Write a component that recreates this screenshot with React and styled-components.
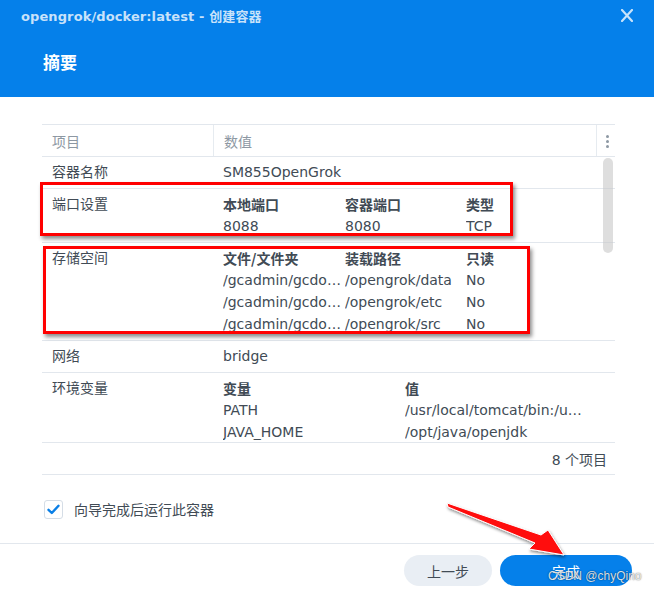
import React from 'react'
import styled, { createGlobalStyle } from 'styled-components'

const GlobalStyle = createGlobalStyle`
    *, *::before, *::after {
        box-sizing: border-box;
    }
    html, body {
        margin: 0;
        padding: 0;
        background: #ffffff;
    }
    body {
        font-family: "DejaVu Sans", "Noto Sans CJK SC", sans-serif;
        font-size: 14px;
        color: #414b55;
    }
`

const rows = [
    { label: '容器名称', value: 'SM855OpenGrok' },
    {
        label: '端口设置',
        cols: [122, 121],
        head: ['本地端口', '容器端口', '类型'],
        lines: [['8088', '8080', 'TCP']],
    },
    {
        label: '存储空间',
        cols: [122, 121],
        head: ['文件/文件夹', '装载路径', '只读'],
        lines: [
            ['/gcadmin/gcdocker/opengrok/data', '/opengrok/data', 'No'],
            ['/gcadmin/gcdocker/opengrok/etc', '/opengrok/etc', 'No'],
            ['/gcadmin/gcdocker/opengrok/src', '/opengrok/src', 'No'],
        ],
    },
    { label: '网络', value: 'bridge' },
    {
        label: '环境变量',
        cols: [182],
        head: ['变量', '值'],
        lines: [
            ['PATH', '/usr/local/tomcat/bin:/usr/local/sbin:/usr/bin'],
            ['JAVA_HOME', '/opt/java/openjdk'],
        ],
    },
    { label: '执行命令', value: '/scripts/start.py' },
    { label: '自动重新启动', value: '否' },
    { label: '资源限制', value: '无' },
]

const SubTable = ({ cols, head, lines }) => {
    const template = cols.map(c => `${c}px`).join(' ') + ' 1fr'
    return (
        <SubGrid $template={template}>
            {head.map(h => <SubHead key={h}>{h}</SubHead>)}
            {lines.map((line, i) => line.map((cell, j) => (
                <SubCell key={`${i}-${j}`}>{cell}</SubCell>
            )))}
        </SubGrid>
    )
}

const CheckIcon = () => (
    <svg width="13" height="11" viewBox="0 0 13 11">
        <path d="M1.5 5.8 L4.8 9 L11.5 1.8" fill="none" stroke="#0a7fe6" strokeWidth="2.4" strokeLinecap="round" strokeLinejoin="round" />
    </svg>
)

const CloseIcon = () => (
    <svg width="12" height="13" viewBox="0 0 12 13">
        <path d="M1 1 L11 12 M11 1 L1 12" stroke="rgba(255,255,255,0.78)" strokeWidth="2.2" strokeLinecap="square" />
    </svg>
)

const Arrow = () => (
    <ArrowSvg width="654" height="594" viewBox="0 0 654 594">
        <defs>
            <filter id="arrowShadow" x="-20%" y="-20%" width="140%" height="140%">
                <feDropShadow dx="1" dy="2" stdDeviation="1.5" floodColor="#000" floodOpacity="0.45" />
            </filter>
        </defs>
        <path
            d="M447 503 L541 535 L548 530 L564 555 L529 549 L535 543 L448 507 Z"
            fill="#ff1010"
            stroke="#ffffff"
            strokeWidth="1"
            strokeLinejoin="round"
            filter="url(#arrowShadow)"
        />
    </ArrowSvg>
)

const App = () => {
    return (
        <>
            <GlobalStyle />
            <Dialog>
                <Header>
                    <TitleBar>
                        <Title>opengrok/docker:latest - 创建容器</Title>
                        <CloseButton><CloseIcon /></CloseButton>
                    </TitleBar>
                    <StepTitle>摘要</StepTitle>
                </Header>

                <Body>
                    <Table>
                        <HeadRow>
                            <HeadCell>项目</HeadCell>
                            <HeadCell $divider>数值</HeadCell>
                            <Kebab>
                                <span /><span /><span />
                            </Kebab>
                        </HeadRow>
                        <ScrollArea>
                            {rows.map(row => (
                                <Row key={row.label}>
                                    <Cell>{row.label}</Cell>
                                    <Cell $value>
                                        {row.head ? <SubTable {...row} /> : row.value}
                                    </Cell>
                                </Row>
                            ))}
                            <Thumb />
                        </ScrollArea>
                        <TableFooter>8 个项目</TableFooter>
                    </Table>

                    <OptionRow>
                        <CheckBox><CheckIcon /></CheckBox>
                        <span>向导完成后运行此容器</span>
                    </OptionRow>
                </Body>

                <Footer>
                    <Button>上一步</Button>
                    <Button $primary>完成</Button>
                </Footer>

                <Marker $x={40} $y={182} $w={473} $h={54} />
                <Marker $x={43} $y={246} $w={487} $h={88} />
                <Arrow />
                <Watermark>CSDN @chyQino</Watermark>
            </Dialog>
        </>
    )
}

const Dialog = styled.div`
    position: relative;
    width: 654px;
    height: 594px;
    display: flex;
    flex-direction: column;
    background: #ffffff;
    overflow: hidden;
`

const Header = styled.div`
    height: 97px;
    flex-shrink: 0;
    background: #0580ea;
    display: flex;
    flex-direction: column;
`

const TitleBar = styled.div`
    height: 30px;
    display: flex;
    align-items: center;
    justify-content: space-between;
    padding: 0 20px 0 21px;
`

const Title = styled.div`
    font-family: "DejaVu Sans", "Noto Sans CJK SC", sans-serif;
    font-weight: bold;
    font-size: 13px;
    color: rgba(255, 255, 255, 0.78);
    letter-spacing: 0.1px;
`

const CloseButton = styled.div`
    display: flex;
    align-items: center;
    justify-content: center;
    width: 14px;
    height: 14px;
`

const StepTitle = styled.div`
    margin-top: 19px;
    padding-left: 43px;
    font-family: "Noto Sans CJK SC", sans-serif;
    font-weight: bold;
    font-size: 17px;
    color: #ffffff;
`

const Body = styled.div`
    flex: 1;
    padding: 27px 39px 0 42px;
    display: flex;
    flex-direction: column;
`

const Table = styled.div`
    border-top: 1px solid #e2e7ed;
    border-bottom: 1px solid #e2e7ed;
`

const HeadRow = styled.div`
    position: relative;
    display: grid;
    grid-template-columns: 171px 1fr;
    height: 32px;
    border-bottom: 1px solid #e2e7ed;
`

const HeadCell = styled.div`
    display: flex;
    align-items: center;
    padding-left: 10px;
    color: #8d98a3;
    font-family: "Noto Sans CJK SC", sans-serif;
    border-left: ${p => (p.$divider ? '1px solid #e6ebf0' : 'none')};
    margin-right: ${p => (p.$divider ? '18px' : '0')};
    border-right: ${p => (p.$divider ? '1px solid #e6ebf0' : 'none')};
`

const Kebab = styled.div`
    position: absolute;
    right: 6px;
    top: 10px;
    display: flex;
    flex-direction: column;
    gap: 2px;

    span {
        width: 3px;
        height: 3px;
        background: #8d98a3;
        border-radius: 50%;
    }
`

const ScrollArea = styled.div`
    position: relative;
    height: 285px;
    overflow: hidden;
`

const Thumb = styled.div`
    position: absolute;
    top: 1px;
    right: 2px;
    width: 10px;
    height: 95px;
    border-radius: 5px;
    background: rgba(200, 200, 200, 0.6);
`

const Row = styled.div`
    display: grid;
    grid-template-columns: 171px 1fr;
    padding: 4px 0 5px;
    border-bottom: 1px solid #e2e7ed;
    line-height: 22px;
`

const Cell = styled.div`
    padding-left: 10px;
    padding-right: ${p => (p.$value ? '30px' : '0')};
    min-width: 0;
    white-space: nowrap;
    overflow: hidden;
    text-overflow: ellipsis;
`

const SubGrid = styled.div`
    display: grid;
    grid-template-columns: ${p => p.$template};
`

const SubHead = styled.div`
    font-weight: bold;
    font-family: "Noto Sans CJK SC", sans-serif;
    white-space: nowrap;
`

const SubCell = styled.div`
    min-width: 0;
    white-space: nowrap;
    overflow: hidden;
    text-overflow: ellipsis;
`

const TableFooter = styled.div`
    height: 32px;
    display: flex;
    align-items: center;
    justify-content: flex-end;
    padding-right: 8px;
    border-top: 1px solid #e2e7ed;
    color: #414b55;
`

const OptionRow = styled.div`
    margin-top: 24px;
    display: flex;
    align-items: center;
    gap: 11px;
    padding-left: 2px;
    font-family: "Noto Sans CJK SC", sans-serif;
`

const CheckBox = styled.div`
    width: 19px;
    height: 19px;
    border: 1px solid #d5dde6;
    border-radius: 3px;
    background: #ffffff;
    display: flex;
    align-items: center;
    justify-content: center;
`

const Footer = styled.div`
    height: 51px;
    flex-shrink: 0;
    border-top: 1px solid #e2e7ed;
    display: flex;
    align-items: flex-start;
    justify-content: flex-end;
    gap: 8px;
    padding: 11px 22px 0 0;
`

const Button = styled.div`
    height: 31px;
    width: ${p => (p.$primary ? '132px' : '88px')};
    border-radius: 16px;
    display: flex;
    align-items: center;
    justify-content: center;
    font-family: "Noto Sans CJK SC", sans-serif;
    font-size: 14px;
    background: ${p => (p.$primary ? '#0580ea' : '#e9eef4')};
    color: ${p => (p.$primary ? '#ffffff' : '#414b55')};
`

const Marker = styled.div`
    position: absolute;
    left: ${p => p.$x}px;
    top: ${p => p.$y}px;
    width: ${p => p.$w}px;
    height: ${p => p.$h}px;
    border: 3px solid #ff0000;
    box-shadow: 2px 3px 4px rgba(0, 0, 0, 0.45);
    pointer-events: none;
`

const ArrowSvg = styled.svg`
    position: absolute;
    left: 0;
    top: 0;
    pointer-events: none;
`

const Watermark = styled.div`
    position: absolute;
    left: 548px;
    top: 569px;
    font-family: "Liberation Sans", sans-serif;
    font-size: 12px;
    color: rgba(255, 255, 255, 0.85);
    text-shadow: 0 0 1px rgba(0, 0, 0, 0.5), 0 0 2px rgba(0, 0, 0, 0.3);
`

export default App
